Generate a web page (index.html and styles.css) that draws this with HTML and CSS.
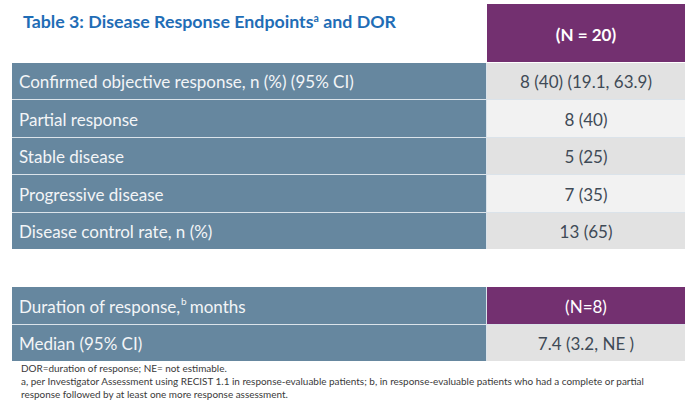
FILE: index.html
```html
<!DOCTYPE html>
<html>
<head>
<meta charset="utf-8">
<link rel="stylesheet" href="styles.css">
</head>
<body>
<div class="page">
  <div class="top">
    <h1 class="title">Table 3: Disease Response Endpoints<sup>a</sup> and DOR</h1>
    <div class="head-cell bold">(N = 20)</div>
  </div>
  <div class="table">
    <div class="label">Confirmed objective response, n (%) (95% CI)</div>
    <div class="val dark">8 (40) (19.1, 63.9)</div>
    <div class="label">Partial response</div>
    <div class="val light">8 (40)</div>
    <div class="label">Stable disease</div>
    <div class="val dark">5 (25)</div>
    <div class="label">Progressive disease</div>
    <div class="val light">7 (35)</div>
    <div class="label">Disease control rate, n (%)</div>
    <div class="val dark">13 (65)</div>
  </div>
  <div class="table second">
    <div class="label">Duration of response,<sup>b</sup> months</div>
    <div class="val purple">(N=8)</div>
    <div class="label">Median (95% CI)</div>
    <div class="val dark">7.4 (3.2, NE )</div>
  </div>
  <div class="notes">
    <p>DOR=duration of response; NE= not estimable.</p>
    <p>a, per Investigator Assessment using RECIST 1.1 in response-evaluable patients; b, in response-evaluable patients who had a complete or partial response followed by at least one more response assessment.</p>
  </div>
</div>
</body>
</html>
```
FILE: styles.css
```css
html, body {
  margin: 0;
  padding: 0;
  background: #ffffff;
}
body {
  font-family: Lato, "Liberation Sans", sans-serif;
  width: 700px;
  height: 418px;
  overflow: hidden;
}
.page {
  padding: 4px 15px 0 12px;
}
.top {
  display: flex;
  height: 58px;
  gap: 1px;
  margin-bottom: 0.5px;
}
.title {
  flex: 0 0 474px;
  margin: 0;
  padding: 6px 0 0 11px;
  box-sizing: border-box;
  font-size: 17.8px;
  font-weight: 700;
  color: #1f6db6;
  line-height: 22px;
}
.title sup {
  font-size: 10.5px;
  vertical-align: 0;
  position: relative;
  top: -6px;
}
.head-cell {
  flex: 0 0 198px;
  background: #733070;
  color: #ffffff;
  display: flex;
  align-items: center;
  justify-content: center;
  font-size: 17px;
  padding-top: 2px;
  box-sizing: border-box;
}
.bold { font-weight: 700; }
.table {
  display: grid;
  grid-template-columns: 474px 198px;
  grid-auto-rows: 36.5px;
  gap: 1px;
  background: #dbe3ea;
  width: 673px;
}
.second {
  margin-top: 38px;
}
.label {
  background: #66879f;
  color: #f3f5f7;
  font-size: 17px;
  display: flex;
  align-items: center;
  padding: 2px 0 0 7px;
}
.label sup {
  font-size: 10px;
  vertical-align: 0;
  position: relative;
  top: -5px;
  margin-left: 1px;
  margin-right: 3px;
}
.val {
  display: flex;
  align-items: center;
  justify-content: center;
  font-size: 17px;
  padding-top: 2px;
  color: #3f4a56;
}
.dark { background: #e2e2e2; }
.light { background: #f2f2f2; }
.purple { background: #733070; color: #ffffff; }
.notes {
  padding: 1px 0 0 9px;
  width: 660px;
  font-size: 9.95px;
  line-height: 13px;
  color: #3a3a3a;
}
.notes p { margin: 0; }
```
